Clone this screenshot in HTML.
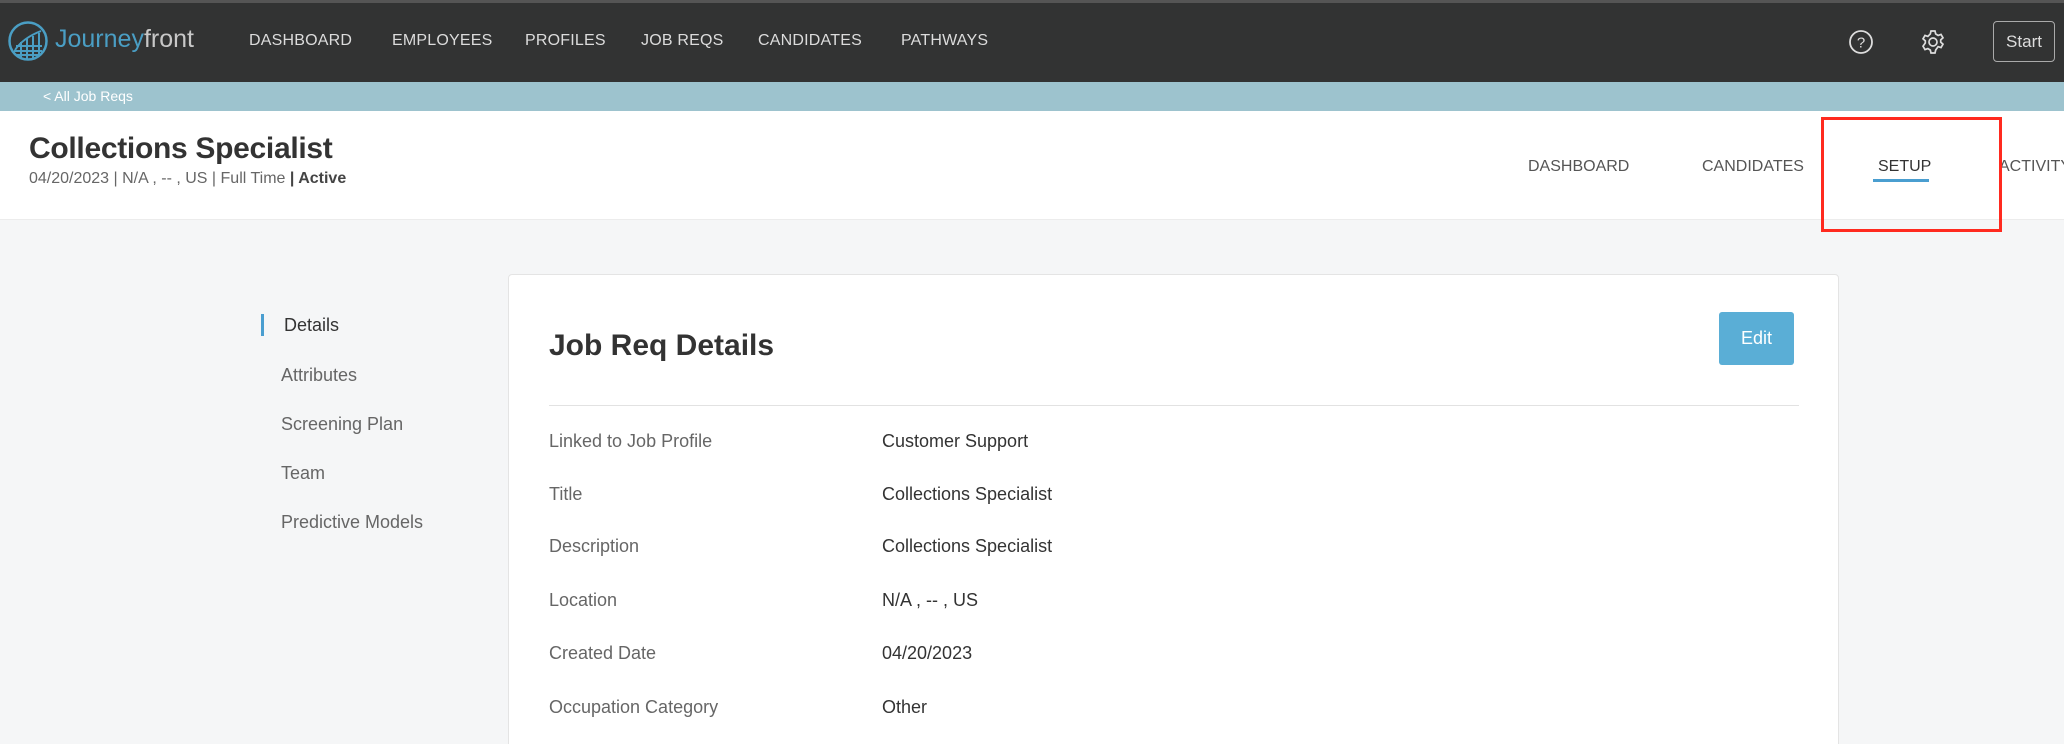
<!DOCTYPE html>
<html style="width:2064px;height:744px;overflow:hidden"><head><meta charset="utf-8"><style>
*{margin:0;padding:0;box-sizing:border-box}
body{width:2064px;height:744px;overflow:hidden;background:#f5f6f7;font-family:"Liberation Sans",sans-serif;position:relative}
.a{position:absolute;white-space:nowrap}
#top{left:0;top:0;width:2064px;height:82px;background:#323333;border-top:3px solid #555}
.nav{top:32px;font-size:16px;color:#dcdcdc;letter-spacing:.2px}
#strip{left:0;top:82px;width:2064px;height:29px;background:#9dc3ce}
#hdr{left:0;top:111px;width:2064px;height:109px;background:#fff;border-bottom:1px solid #ececec}
.tab{top:158px;font-size:16px;color:#555}
.ln{font-size:18px;color:#666}
.lab{left:549px;font-size:18px;color:#666}
.val{left:882px;font-size:18px;color:#333}
</style></head><body>
<div class="a" id="top"></div>
<svg class="a" style="left:7px;top:20px" width="42" height="42" viewBox="0 0 42 42"><circle cx="21" cy="21" r="18.5" fill="none" stroke="#4a9ec4" stroke-width="2.5"/><path d="M8 30 Q16 18 34 11 M9 26h26 M7 31h28 M10 35h22 M14 22v16 M20 19v20 M26 16v23 M32 13v22" stroke="#4a9ec4" stroke-width="2" fill="none"/></svg>
<div class="a" style="left:55px;top:25px;font-size:25px;color:#4a9ec4">Journey<span style="color:#c8c8c8">front</span></div>
<div class="a nav" style="left:249px">DASHBOARD</div>
<div class="a nav" style="left:392px">EMPLOYEES</div>
<div class="a nav" style="left:525px">PROFILES</div>
<div class="a nav" style="left:641px">JOB REQS</div>
<div class="a nav" style="left:758px">CANDIDATES</div>
<div class="a nav" style="left:901px">PATHWAYS</div>
<svg class="a" style="left:1848px;top:29px" width="26" height="26" viewBox="0 0 26 26"><circle cx="13" cy="13" r="11" fill="none" stroke="#ddd" stroke-width="1.8"/><text x="13" y="18.5" font-size="15" fill="#ddd" text-anchor="middle" font-family="Liberation Sans">?</text></svg>
<svg class="a" style="left:1920px;top:29px" width="26" height="26" viewBox="0 0 26 26"><g fill="none" stroke="#ddd" stroke-width="1.7"><circle cx="13" cy="13" r="4"/><path d="M11 2h4l.7 3 2.4 1.4 2.9-1 2 3.4-2.3 2.1v2.2l2.3 2.1-2 3.4-2.9-1L15.7 21 15 24h-4l-.7-3-2.4-1.4-2.9 1-2-3.4L5.3 14v-2.2L3 9.8l2-3.4 2.9 1L10.3 5z"/></g></svg>
<div class="a" style="left:1993px;top:21px;width:62px;height:41px;border:1px solid #aaa;border-radius:4px;color:#ddd;font-size:17px;text-align:center;line-height:39px">Start</div>
<div class="a" id="strip"></div>
<div class="a" style="left:43px;top:88px;font-size:14px;color:#fff">&lt; All Job Reqs</div>
<div class="a" id="hdr"></div>
<div class="a" style="left:29px;top:132px;font-size:30px;font-weight:bold;color:#333;letter-spacing:-0.3px">Collections Specialist</div>
<div class="a" style="left:29px;top:170px;font-size:16px;color:#666">04/20/2023 | N/A , -- , US | Full Time <b style="color:#444">| Active</b></div>
<div class="a tab" style="left:1528px">DASHBOARD</div>
<div class="a tab" style="left:1702px">CANDIDATES</div>
<div class="a tab" style="left:1878px;color:#333">SETUP</div>
<div class="a" style="left:1873px;top:179px;width:56px;height:3px;background:#4a9ed0"></div>
<div class="a tab" style="left:1999px">ACTIVITY</div>
<div class="a" style="left:1821px;top:117px;width:181px;height:115px;border:3px solid #ff2a1f"></div>
<div class="a" style="left:261px;top:314px;width:3px;height:22px;background:#4a9ed0"></div>
<div class="a ln" style="left:284px;top:315px;color:#333">Details</div>
<div class="a ln" style="left:281px;top:365px">Attributes</div>
<div class="a ln" style="left:281px;top:414px">Screening Plan</div>
<div class="a ln" style="left:281px;top:463px">Team</div>
<div class="a ln" style="left:281px;top:512px">Predictive Models</div>
<div class="a" style="left:508px;top:274px;width:1331px;height:480px;background:#fff;border:1px solid #e4e4e4;border-radius:4px"></div>
<div class="a" style="left:549px;top:329px;font-size:30px;font-weight:bold;color:#333">Job Req Details</div>
<div class="a" style="left:1719px;top:312px;width:75px;height:53px;background:#5aaed6;border-radius:3px;color:#fff;font-size:18px;text-align:center;line-height:53px">Edit</div>
<div class="a" style="left:549px;top:405px;width:1250px;height:1px;background:#e2e2e2"></div>
<div class="a lab" style="top:431px">Linked to Job Profile</div><div class="a val" style="top:431px">Customer Support</div>
<div class="a lab" style="top:484px">Title</div><div class="a val" style="top:484px">Collections Specialist</div>
<div class="a lab" style="top:536px">Description</div><div class="a val" style="top:536px">Collections Specialist</div>
<div class="a lab" style="top:590px">Location</div><div class="a val" style="top:590px">N/A , -- , US</div>
<div class="a lab" style="top:643px">Created Date</div><div class="a val" style="top:643px">04/20/2023</div>
<div class="a lab" style="top:697px">Occupation Category</div><div class="a val" style="top:697px">Other</div>
</body></html>
